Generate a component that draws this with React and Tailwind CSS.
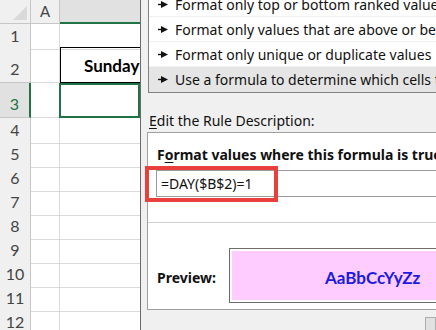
const ui = { fontFamily: "'Noto Sans', 'Open Sans', sans-serif" };
const xl = { fontFamily: "Lato, 'Liberation Sans', sans-serif" };

const rules = [
  "Format only top or bottom ranked values",
  "Format only values that are above or below average",
  "Format only unique or duplicate values",
  "Use a formula to determine which cells to format",
];

function Arrow() {
  return (
    <svg width="10" height="7" viewBox="0 0 10 7" className="shrink-0">
      <path d="M0 3.5H4" stroke="#111" strokeWidth="1.4" />
      <polygon points="3,0 10,3.5 3,7" fill="#111" />
    </svg>
  );
}

function Sheet() {
  const rows = [
    { n: 1, h: "h-[24px]" },
    { n: 2, h: "h-[35px]" },
    { n: 3, h: "h-[35px]" },
    ...[4, 5, 6, 7, 8, 9, 10, 11, 12].map(n => ({ n, h: "h-[24px]" })),
  ];
  return (
    <div className="w-[140px] shrink-0 bg-white" style={xl}>
      <div className="grid grid-cols-[31px_29px_80px] h-[24px]">
        <div className="relative bg-[#f0f0f0] border-r border-b border-[#c6c6c6]">
          <div className="absolute right-[3px] bottom-[3px] w-0 h-0 border-l-[14px] border-l-transparent border-b-[14px] border-b-[#d9d9d9]" />
        </div>
        <div className="bg-[#f0f0f0] border-r border-b border-[#c6c6c6] flex items-center justify-center text-[15px] text-[#444]">A</div>
        <div className="bg-[#e1e1e1] border-b-2 border-[#217346]" />
      </div>
      {rows.map(r => (
        <div key={r.n} className={`grid grid-cols-[31px_29px_80px] ${r.h}`}>
          <div
            className={
              r.n === 3
                ? "bg-[#e1e1e1] border-r-2 border-r-[#217346] border-b border-b-[#c6c6c6] flex items-end justify-center pb-[1px] text-[16px] text-[#217346]"
                : "bg-[#f0f0f0] border-r border-b border-[#c6c6c6] flex items-end justify-center pb-[1px] text-[16px] text-[#444]"
            }
          >
            {r.n}
          </div>
          <div className="border-r border-b border-[#dadada]" />
          {r.n === 2 ? (
            <div className="border-t border-b border-l border-black -mt-px flex items-center pl-[23px] pt-[2px] font-bold text-[17px] text-black whitespace-nowrap overflow-hidden">
              Sunday
            </div>
          ) : r.n === 3 ? (
            <div className="border-2 border-[#217346] -ml-px" />
          ) : (
            <div className="border-b border-[#dadada]" />
          )}
        </div>
      ))}
    </div>
  );
}

function Dialog() {
  return (
    <div className="flex-1 min-w-0 bg-[#f0f0f0] border-l border-[#6b6b6b] overflow-hidden" style={ui}>
      <div className="ml-[7px] -mt-[8px] bg-white border-l border-b border-[#828282]">
        {rules.map((t, i) => (
          <div
            key={t}
            className={
              i === 3
                ? "h-[25px] flex items-center gap-[7px] pl-[9px] bg-[#e5e5e5] text-[14px] text-[#111] whitespace-nowrap"
                : "h-[25px] flex items-center gap-[7px] pl-[9px] border-b border-[#f0f0f0] text-[14px] text-[#111] whitespace-nowrap"
            }
          >
            <Arrow />
            <span>{t}</span>
          </div>
        ))}
      </div>
      <div className="ml-[8px] mt-[17px] h-[20px] flex items-center text-[14px] text-[#111] whitespace-nowrap">
        <span className="underline underline-offset-2">E</span>dit the Rule Description:
      </div>
      <div className="relative ml-[6px] mt-[2px] h-[178px] bg-white border-l border-t border-b border-[#a0a0a0]">
        <div className="mt-[11px] ml-[9px] h-[20px] flex items-center font-bold text-[14px] text-[#111] whitespace-nowrap">
          F<span className="underline underline-offset-2">o</span>rmat values where this formula is true:
        </div>
        <div className="mt-[6px] ml-[8px] h-[27px] border-l border-t border-b border-[#9a9a9a] flex items-center pl-[4px] text-[14px] text-[#111]">
          =DAY($B$2)=1
        </div>
        <div className="mt-[25px] border-t border-[#d0d0d0]" />
        <div className="mt-[25px] flex items-center">
          <div className="w-[81px] pl-[9px] pt-[4px] font-bold text-[14px] text-[#111]">Preview:</div>
          <div className="flex-1 h-[55px] border-l border-t border-b border-[#6d6d6d] p-[2px] pr-0">
            <div className="h-full bg-[#ffccff] flex items-center pl-[93px] pt-[4px] font-bold text-[17px] text-[#1a1ae0] whitespace-nowrap" style={xl}>
              AaBbCcYyZz
            </div>
          </div>
        </div>
        <div className="absolute left-[-3px] top-[33px] w-[133px] h-[36px] border-4 border-[#e8413c]" />
      </div>
      <div className="mt-[7px] ml-[284px] h-[24px] bg-[#e1e1e1] border border-[#adadad]" />
    </div>
  );
}

export default function App() {
  return (
    <div className="w-[436px] h-[330px] overflow-hidden flex bg-white">
      <Sheet />
      <Dialog />
    </div>
  );
}
